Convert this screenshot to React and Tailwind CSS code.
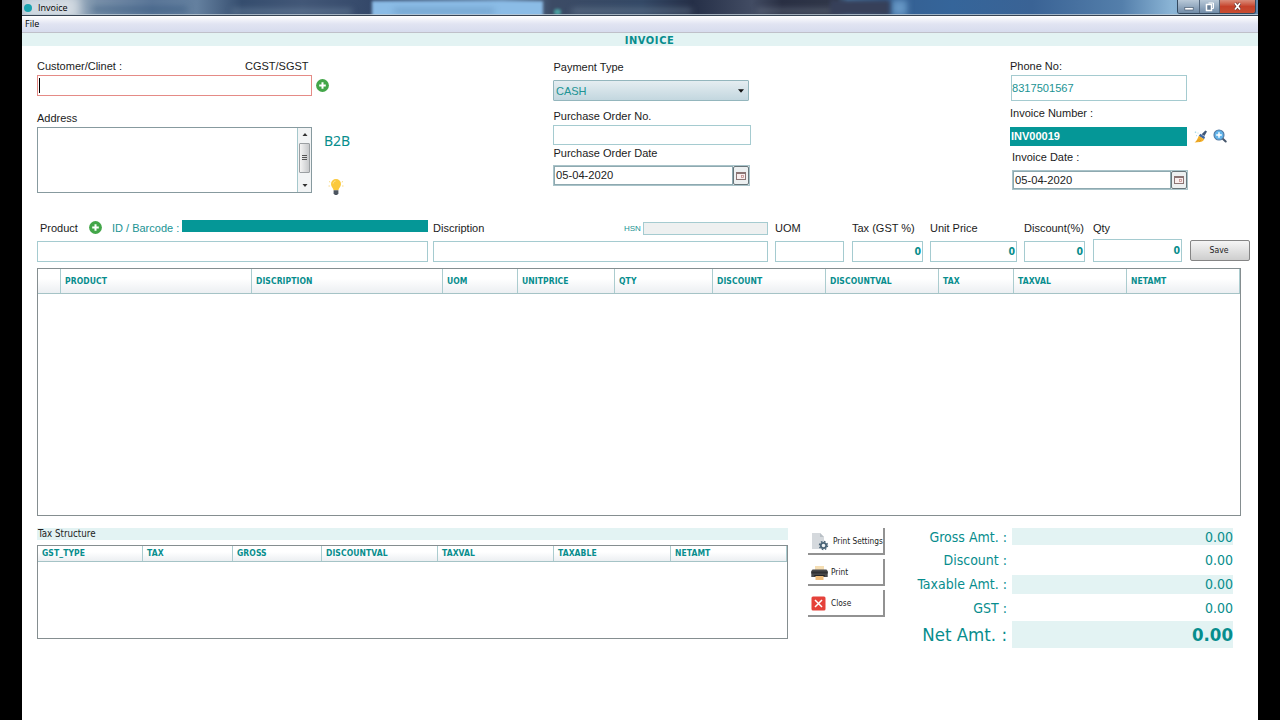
import React from 'react'

const tahoma = "font-['DejaVu_Sans_Condensed','DejaVu_Sans',sans-serif]"

const itemColumns = [
    { title: '', width: 'w-[23px]' },
    { title: 'PRODUCT', width: 'w-[191px]' },
    { title: 'DISCRIPTION', width: 'w-[191px]' },
    { title: 'UOM', width: 'w-[75px]' },
    { title: 'UNITPRICE', width: 'w-[97px]' },
    { title: 'QTY', width: 'w-[98px]' },
    { title: 'DISCOUNT', width: 'w-[113px]' },
    { title: 'DISCOUNTVAL', width: 'w-[113px]' },
    { title: 'TAX', width: 'w-[75px]' },
    { title: 'TAXVAL', width: 'w-[113px]' },
    { title: 'NETAMT', width: 'w-[113px]' }
]

const taxColumns = [
    { title: 'GST_TYPE', width: 'w-[105px]' },
    { title: 'TAX', width: 'w-[90px]' },
    { title: 'GROSS', width: 'w-[89px]' },
    { title: 'DISCOUNTVAL', width: 'w-[116px]' },
    { title: 'TAXVAL', width: 'w-[116px]' },
    { title: 'TAXABLE', width: 'w-[117px]' },
    { title: 'NETAMT', width: 'w-[116px]' }
]

const totals = [
    { label: 'Gross Amt. :', row: 'h-[17px] mb-[6px]', text: 'pt-[2px]', band: 'bg-[#e3f3f3]' },
    { label: 'Discount :', row: 'h-[18px] mb-[6px]', text: '', band: '' },
    { label: 'Taxable Amt. :', row: 'h-[19px] mb-[5px]', text: '', band: 'bg-[#e3f3f3]' },
    { label: 'GST :', row: 'h-[17px] mb-[5px]', text: 'pt-[2px]', band: '' }
]

const PlusIcon = () => (
    <svg width="13" height="13" viewBox="0 0 13 13" className="shrink-0">
        <circle cx="6.5" cy="6.5" r="6.4" fill="#43a649" />
        <path d="M6.5 3.2v6.6M3.2 6.5h6.6" stroke="#fff" strokeWidth="2" />
    </svg>
)

const BulbIcon = () => (
    <svg width="16" height="18" viewBox="0 0 16 18">
        <path d="M8 1a5 5 0 0 0-5 5c0 2.7 2 3.7 2.6 6.3h4.8C11 9.7 13 8.7 13 6a5 5 0 0 0-5-5z" fill="#fbc93d" />
        <path d="M5.2 5.5C5.3 4 6.3 3.1 7.5 3" stroke="#fde59a" strokeWidth="1" fill="none" />
        <path d="M5.6 12.3h4.8v3L9.2 17H6.8l-1.2-1.7z" fill="#4c5560" />
        <path d="M1 3.5l1.2.6M15 3.5l-1.2.6M.5 8h1.4M15.5 8h-1.4" stroke="#f8d77c" strokeWidth="1" />
    </svg>
)

const BroomIcon = () => (
    <svg width="13" height="13" viewBox="0 0 13 13">
        <path d="M11.4.4L13 1.600 10.400 6 7.600 4.200z" fill="#3e5677" />
        <path d="M6.3 3.800l4.800 3.300-1 2.200L4.800 6z" fill="#3f67a0" />
        <path d="M4.800 5.700l5.300 3.600c-.8 1.800-2.300 2.600-4 2.800L.5 12.500c2.200-1.500 3.300-4.200 4.300-6.800z" fill="#f4b02a" />
        <path d="M2.5 11.5l3-2M5 11.7l2-1.7" stroke="#d08b17" strokeWidth=".6" />
        <path d="M1.500 1.500v1.600M.7 2.300h1.600M4 2.500v1.200M2.500 5v1.200" stroke="#9fd5e8" strokeWidth=".7" />
    </svg>
)

const SearchIcon = () => (
    <svg width="14" height="14" viewBox="0 0 14 14">
        <path d="M9.500 9.500l3.200 3" stroke="#46566b" strokeWidth="2" strokeLinecap="round" />
        <circle cx="6" cy="6" r="5" fill="#62b4ea" stroke="#5077a0" strokeWidth="1.100" />
        <path d="M6 3.200v5.600M3.200 6h5.600" stroke="#fff" strokeWidth="1.500" />
    </svg>
)

const SettingsIcon = () => (
    <svg width="18" height="19" viewBox="0 0 18 19" className="shrink-0">
        <path d="M1 1h8l4 4v12H1z" fill="#d5d9dd" />
        <path d="M9 1l4 4H9z" fill="#b9c0c6" />
        <circle cx="12.5" cy="13.5" r="2.7" fill="#eef2f4" stroke="#4b6578" strokeWidth="1.800" />
        <circle cx="12.5" cy="13.5" r="4" fill="none" stroke="#4b6578" strokeWidth="1.400" strokeDasharray="1.570 1.570" />
    </svg>
)

const PrinterIcon = () => (
    <svg width="17" height="16" viewBox="0 0 17 16" className="shrink-0">
        <path d="M4 1h9v5H4z" fill="#f5deb4" />
        <path d="M1.5 4.500h14l1.200 1.500v6H.3V6z" fill="#4b4b4c" />
        <path d="M.3 6.500h16.400v2H.3z" fill="#303133" />
        <path d="M3.3 10h10.400v1.300H3.300z" fill="#242527" />
        <path d="M4.500 11h8v4h-8z" fill="#efbd7b" />
    </svg>
)

const CloseIcon = () => (
    <svg width="15" height="15" viewBox="0 0 15 15" className="shrink-0">
        <rect x=".5" y=".5" width="14" height="14" rx="1.5" fill="#e5413a" />
        <path d="M4 4l7 7M11 4l-7 7" stroke="#fff" strokeWidth="1.5" />
    </svg>
)

const CalendarButton = () => (
    <div className="w-[16px] shrink-0 flex items-center justify-center rounded-[2px] border border-[#68757a] bg-[#edf0f1]">
        <svg width="10" height="8" viewBox="0 0 10 8">
            <rect x=".5" y=".5" width="9" height="7" fill="#f8eeee" stroke="#8b7474" />
            <path d="M1 1.5h8" stroke="#8b7474" />
            <rect x="5.5" y="3.5" width="2" height="2" fill="none" stroke="#c38f8f" strokeWidth=".8" />
        </svg>
    </div>
)

const DateField = ({ className }) => (
    <div className={`flex border border-[#a9c3c9] bg-[#dceaed] ${className}`}>
        <div className="flex-1 flex items-center pl-[1px] bg-white border border-[#8ea9b0] text-[11.2px] text-[#222]">
            05-04-2020
        </div>
        <CalendarButton />
    </div>
)

const Label = ({ children, className = '' }) => (
    <div className={`h-[14px] leading-[14px] text-[11px] text-[#1b1b1b] whitespace-nowrap ${className}`}>{children}</div>
)

const TableHeader = ({ columns, className }) => (
    <div className={`flex bg-linear-to-b from-white from-40% to-[#eceff2] border-b border-[#a5c3c6] ${className}`}>
        {columns.map((column, i) => (
            <div
                key={i}
                className={`${column.width} shrink-0 flex items-center pl-[4px] border-r border-[#abcccf] font-bold text-[8.5px] tracking-[0.08px] text-[#078d8d] ${tahoma}`}
            >
                {column.title}
            </div>
        ))}
    </div>
)

const NumberField = ({ label, className, inputClass = 'h-[21px] mt-[6px]' }) => (
    <div className={className}>
        <Label>{label}</Label>
        <div className={`flex items-center justify-end pt-px pr-px border border-[#a5cbd0] font-bold text-[10.5px] text-[#078d8d] ${tahoma} ${inputClass}`}>
            0
        </div>
    </div>
)

const SideButton = ({ icon, children, className = '' }) => (
    <button className={`w-[77px] h-[27px] pt-[2px] flex items-center border-r-2 border-b-2 border-[#929292] text-[8.25px] text-[#1b1b1b] whitespace-nowrap ${tahoma} ${className}`}>
        {icon}
        {children}
    </button>
)

const TitleBar = () => (
    <div className="relative h-[16px] overflow-hidden border-b border-[#364353] bg-linear-to-r from-[#7e96af] via-[#3c506d] to-[#5e95c5]">
        <div className="absolute inset-0 bg-[linear-gradient(90deg,#9fb2c4_0px,#a9b8c6_45px,#7890a9_75px,#5a7698_130px,#64809f_175px,#354d6e_220px,#425777_280px,#344869_350px,#6689ad_480px,#3c4b65_530px,#344966_620px,#252f47_670px,#424c63_730px,#292f43_760px,#303749_815px,#4c83b5_826px,#355f91_860px,#35659a_930px,#3a6395_1010px,#547fab_1100px,#8bb5d6_1150px,#638bb1_1236px)]"></div>
        <div className="absolute left-0 -top-1 w-[58px] h-[24px] bg-white/50 blur-[5px]"></div>
        <div className="absolute left-[70px] top-[7px] w-[95px] h-[5px] bg-[#21456d]/40 blur-[3px]"></div>
        <div className="absolute left-[210px] top-[9px] w-[120px] h-[5px] bg-[#8ba4ba]/40 blur-[3px]"></div>
        <div className="absolute left-[350px] top-[1px] w-[171px] h-[16px] bg-[#8bbce6] blur-[1.5px]"></div>
        <div className="absolute left-[372px] top-[9px] w-[100px] h-[4px] bg-[#4c7ca6]/50 blur-[3px]"></div>
        <div className="absolute left-[532px] top-[9px] w-[7px] h-[6px] rounded-full bg-[#4ca4a4] blur-[1.5px]"></div>
        <div className="absolute left-[550px] top-[9px] w-[120px] h-[4px] bg-[#8c9db2]/50 blur-[3px]"></div>
        <div className="absolute left-[735px] top-[9px] w-[120px] h-[4px] bg-[#a1a9b8]/40 blur-[3px]"></div>
        <div className="absolute left-[870px] top-0 w-[15px] h-[16px] bg-[#79add8]/70 blur-[3px]"></div>
        <div className="absolute left-[808px] top-0 w-[60px] h-[16px] bg-[#374059] blur-[2px]"></div>
        <div className="absolute inset-x-0 bottom-0 h-px bg-[#bdc9d3]/80"></div>
        <div className="relative flex items-center h-full">
            <div className="w-[8px] h-[8px] ml-[2px] rounded-full bg-[#1aa3b0]"></div>
            <span className="ml-[6px] text-[9px] text-black font-['Open_Sans',sans-serif]">Invoice</span>
            <div className="ml-auto mr-[2px] self-start flex h-[14px] rounded-b-[3px] border border-t-0 border-[#33495f] overflow-hidden">
                <div className="w-[22px] flex items-center justify-center bg-linear-to-b from-[#b9c9d8] to-[#718ca8] border-r border-[#53677d]">
                    <svg width="10" height="12" viewBox="0 0 10 12">
                        <rect x=".8" y="6.500" width="8.400" height="2.500" fill="#fff" stroke="#485b70" strokeWidth=".7" />
                    </svg>
                </div>
                <div className="w-[20px] flex items-center justify-center bg-linear-to-b from-[#b9c9d8] to-[#718ca8] border-r border-[#53677d]">
                    <svg width="10" height="10" viewBox="0 0 10 10">
                        <path d="M3.500 1h5v5.500H7" fill="none" stroke="#fff" strokeWidth="1" />
                        <rect x="1.500" y="2.500" width="5" height="6" fill="#697f96" stroke="#fff" strokeWidth="1.500" />
                    </svg>
                </div>
                <div className="w-[35px] flex items-center justify-center bg-linear-to-b from-[#d98c7a] via-[#c5412a] to-[#c84d31]">
                    <svg width="9" height="9" viewBox="0 0 9 9">
                        <path d="M2 1.200l5 6.300M7 1.200L2 7.500" stroke="#663332" strokeWidth="3" />
                        <path d="M2 1.200l5 6.300M7 1.200L2 7.500" stroke="#fff" strokeWidth="1.800" />
                    </svg>
                </div>
            </div>
        </div>
    </div>
)

const CustomerColumn = () => (
    <div className="w-[516px] pt-[13px]">
        <div className="flex">
            <Label className="w-[208px]">Customer/Clinet :</Label>
            <Label>CGST/SGST</Label>
        </div>
        <div className="flex items-center mt-[2px]">
            <div className="w-[275px] h-[21px] p-[1px] border border-[#e58b86]">
                <div className="w-px h-[15px] mt-px bg-black"></div>
            </div>
            <div className="ml-[4px] mb-px"><PlusIcon /></div>
        </div>
        <Label className="mt-[15px]">Address</Label>
        <div className="flex mt-[2px]">
            <div className="w-[275px] h-[66px] flex justify-end border border-[#879a9f]">
                <div className="w-[14px] flex flex-col items-center justify-between py-[4px] border-l border-[#a5c8cc] bg-[#f2f4f5]">
                    <svg width="6" height="5" viewBox="0 0 6 5"><path d="M3 1L5.500 4h-5z" fill="#333" /></svg>
                    <div className="w-[11px] h-[30px] -mt-[2px] mb-[3px] flex flex-col items-center justify-center gap-px rounded-[1px] border border-[#9b9fa2] bg-linear-to-r from-[#f4f4f4] to-[#c7c9cb]">
                        <div className="w-[5px] h-px bg-[#555]"></div>
                        <div className="w-[5px] h-px bg-[#555]"></div>
                        <div className="w-[5px] h-px bg-[#555]"></div>
                    </div>
                    <svg width="6" height="5" viewBox="0 0 6 5"><path d="M3 4L5.500 1h-5z" fill="#333" /></svg>
                </div>
            </div>
            <div className="ml-[12px] flex flex-col justify-between">
                <span className="h-[28px] leading-[28px] text-[14px] text-[#078d8d] font-['Noto_Sans',sans-serif]">B2B</span>
                <div className="ml-[4px] -mb-[3px]"><BulbIcon /></div>
            </div>
        </div>
    </div>
)

const PaymentColumn = () => (
    <div className="w-[457px] pt-[14px]">
        <Label className="pl-[0.5px]">Payment Type</Label>
        <div className="w-[196px] h-[21px] mt-[6px] pt-px pl-[2px] pr-[4px] flex items-center justify-between border border-[#94b6bd] rounded-[1px] bg-linear-to-b from-[#e5edf1] to-[#c3d7df] text-[11px] text-[#209393]">
            CASH
            <svg width="6" height="4" viewBox="0 0 6 4"><path d="M0 .3h6L3 3.800z" fill="#111" /></svg>
        </div>
        <Label className="mt-[8px] pl-[0.5px]">Purchase Order No.</Label>
        <div className="w-[198px] h-[20px] mt-[2px] border border-[#a5cbd0]"></div>
        <Label className="mt-px pl-[0.5px]">Purchase Order Date</Label>
        <DateField className="w-[197px] h-[21px] mt-[5px]" />
    </div>
)

const InvoiceColumn = () => (
    <div className="pt-[13px]">
        <Label>Phone No:</Label>
        <div className="w-[176px] h-[26px] mt-[2px] ml-px flex items-center border border-[#a5cbd0] text-[11.1px] text-[#209393]">
            8317501567
        </div>
        <Label className="mt-[5px]">Invoice Number :</Label>
        <div className="flex items-center mt-[7px]">
            <div className="w-[177px] h-[19px] flex items-center pl-px bg-[#059797] font-bold text-[11px] text-white">INV00019</div>
            <div className="ml-[7px] mb-px"><BroomIcon /></div>
            <div className="ml-[6px] mb-px"><SearchIcon /></div>
        </div>
        <Label className="mt-[4px] ml-[2px]">Invoice Date :</Label>
        <DateField className="w-[176px] h-[20px] mt-[6px] ml-[2px]" />
    </div>
)

const ProductEntry = () => (
    <div className="flex h-[41px]">
        <div className="w-[391px]">
            <div className="flex h-[14px]">
                <Label className="w-[49px] pl-[3px]">Product</Label>
                <div className="ml-[3px]"><PlusIcon /></div>
                <span className="ml-[10px] w-[70px] leading-[15px] text-[11px] text-[#209393] whitespace-nowrap">ID / Barcode :</span>
                <div className="flex-1 h-[12px] -mt-px bg-[#059797]"></div>
            </div>
            <div className="h-[21px] mt-[6px] border border-[#a5cbd0]"></div>
        </div>
        <div className="w-[335px] ml-[5px]">
            <div className="flex h-[14px]">
                <Label className="w-[191px]">Discription</Label>
                <span className="w-[19px] leading-[15px] text-[8px] text-[#209393]">HSN</span>
                <div className="w-[125px] h-[13px] mt-px border border-[#a5cbd0] bg-[#eef0f0]"></div>
            </div>
            <div className="h-[21px] mt-[6px] border border-[#a5cbd0]"></div>
        </div>
        <div className="w-[69px] ml-[7px]">
            <Label>UOM</Label>
            <div className="h-[21px] mt-[6px] border border-[#a5cbd0]"></div>
        </div>
        <NumberField label="Tax (GST %)" className="w-[71px] ml-[8px]" />
        <NumberField label="Unit Price" className="w-[87px] ml-[7px]" />
        <NumberField label="Discount(%)" className="w-[61px] ml-[7px]" />
        <NumberField label="Qty" className="w-[89px] ml-[8px]" inputClass="h-[23px] mt-[4px]" />
        <button className={`w-[60px] h-[21px] ml-[8px] mt-[19px] pr-[2px] border border-[#858585] rounded-[2px] bg-linear-to-b from-[#f5f5f5] to-[#cecece] text-[8.6px] text-[#1b1b1b] ${tahoma}`}>
            Save
        </button>
    </div>
)

const Totals = () => (
    <div className={`w-[348px] text-[14px] text-[#078d8d] ${tahoma}`}>
        {totals.map((total) => (
            <div key={total.label} className={`flex ${total.row}`}>
                <div className={`w-[122px] flex items-center justify-end whitespace-nowrap ${total.text}`}>{total.label}</div>
                <div className={`w-[221px] ml-[5px] flex items-center justify-end ${total.text} ${total.band}`}>0.00</div>
            </div>
        ))}
        <div className="flex h-[27px] text-[18.5px]">
            <div className="w-[122px] flex items-center justify-end whitespace-nowrap">Net Amt. :</div>
            <div className="w-[221px] ml-[5px] flex items-center justify-end bg-[#e3f3f3] font-bold">0.00</div>
        </div>
    </div>
)

export default function App() {
    return (
        <div className="w-[1280px] h-[720px] px-[22px] bg-black overflow-hidden font-['Liberation_Sans',sans-serif]">
            <div className="h-full bg-white">
                <TitleBar />
                <div className="h-[17px] pl-[3px] flex items-center border-b border-[#bfc0c9] bg-linear-to-b from-white via-[#e1e4f2] to-[#d7dcee] text-[9px] text-black font-['Open_Sans',sans-serif]">
                    File
                </div>
                <div className={`h-[13px] pt-[3px] pl-[19px] flex items-center justify-center bg-[#e3f3f3] font-bold text-[11px] tracking-[0.6px] text-[#078d8d] ${tahoma}`}>
                    INVOICE
                </div>
                <div className="pl-[15px]">
                    <div className="flex h-[175px]">
                        <CustomerColumn />
                        <PaymentColumn />
                        <InvoiceColumn />
                    </div>
                    <ProductEntry />
                    <div className="w-[1204px] h-[248px] mt-[6px] border border-[#858e90]">
                        <TableHeader columns={itemColumns} className="h-[25px]" />
                    </div>
                    <div className="flex mt-[12px]">
                        <div className="w-[751px]">
                            <div className={`h-[12px] leading-[12px] pl-px bg-[#e3f3f3] text-[9.7px] text-[#222] ${tahoma}`}>
                                Tax Structure
                            </div>
                            <div className="h-[94px] mt-[5px] border border-[#858e90]">
                                <TableHeader columns={taxColumns} className="h-[16px]" />
                            </div>
                        </div>
                        <div className="ml-[20px] flex flex-col gap-[4px]">
                            <SideButton icon={<SettingsIcon />} className="pl-[3px] gap-[4px]">Print Settings</SideButton>
                            <SideButton icon={<PrinterIcon />} className="pl-[3px] gap-[3px]">Print</SideButton>
                            <SideButton icon={<CloseIcon />} className="pl-[3px] gap-[5px]">Close</SideButton>
                        </div>
                        <Totals />
                    </div>
                </div>
            </div>
        </div>
    )
}
